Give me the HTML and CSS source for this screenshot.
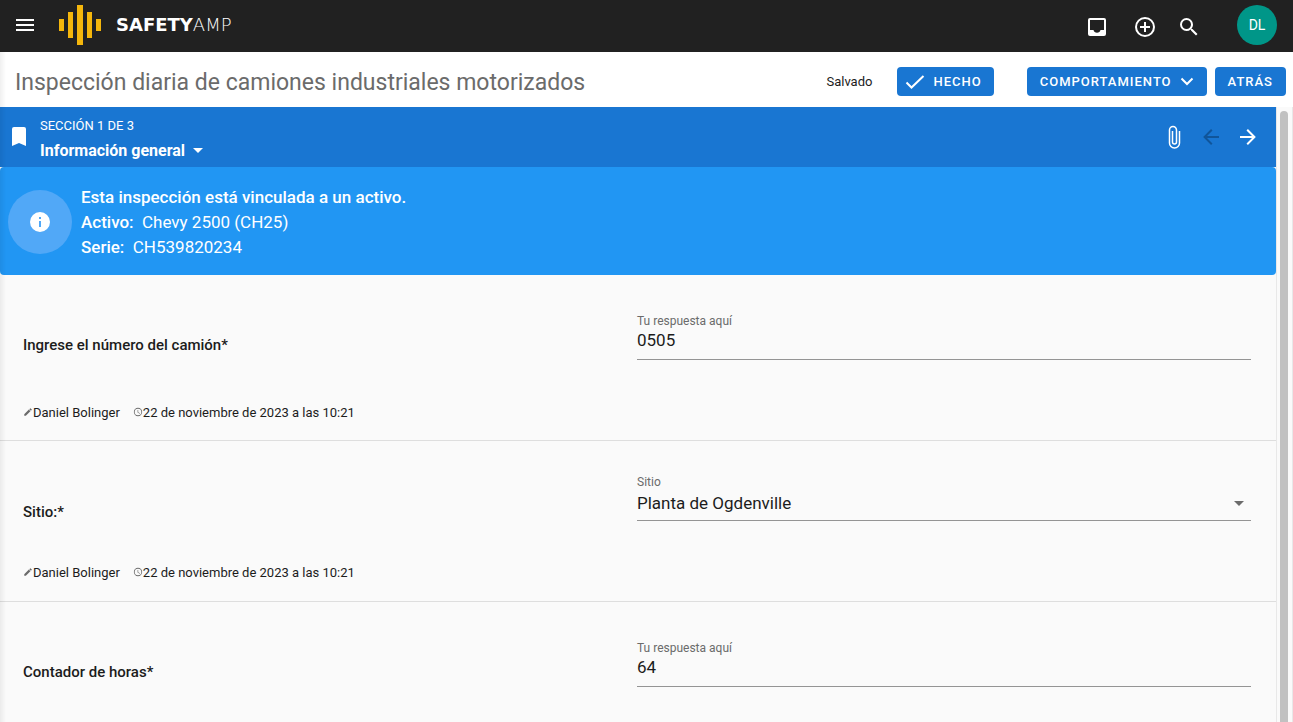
FILE: index.html
```
<!doctype html>
<html lang="es">
<head>
<meta charset="utf-8">
<meta name="viewport" content="width=device-width, initial-scale=1">
<title>SafetyAmp - Inspección</title>
<link rel="stylesheet" href="styles.css">
</head>
<body>
<header class="topbar">
	<button class="icon-btn" aria-label="Menú">
		<svg width="24" height="24" viewBox="0 0 24 24"><path d="M3 6h18v2H3zM3 11h18v2H3zM3 16h18v2H3z"/></svg>
	</button>
	<a class="logo" href="#">
		<svg width="42" height="40" viewBox="0 0 42 40"><path d="M0 14h5v12H0zM9 7h5v26H9zM18 0h6v40h-6zM28 7h5v26h-5zM37 14h5v12h-5z"/></svg>
		<span class="logo-text"><b>SAFETY</b>AMP</span>
	</a>
	<div class="topbar-tools">
		<button class="icon-btn" aria-label="Bandeja">
			<svg width="24" height="24" viewBox="0 0 24 24"><path d="M19 3H5a2 2 0 0 0-2 2v14a2 2 0 0 0 2 2h14a2 2 0 0 0 2-2V5a2 2 0 0 0-2-2zM5 5h14v10h-3.500a3.600 3.600 0 0 1-7 0H5z" fill-rule="evenodd"/></svg>
		</button>
		<button class="icon-btn" aria-label="Agregar">
			<svg width="24" height="24" viewBox="0 0 24 24"><path d="M12 20a8 8 0 1 1 0-16 8 8 0 0 1 0 16m0-18a10 10 0 1 0 0 20 10 10 0 0 0 0-20m1 5h-2v4H7v2h4v4h2v-4h4v-2h-4z"/></svg>
		</button>
		<button class="icon-btn search" aria-label="Buscar">
			<svg width="24" height="24" viewBox="0 0 24 24"><path d="M9.500 3A6.500 6.500 0 0 1 16 9.500c0 1.610-.590 3.090-1.560 4.230l.270.270h.790l5 5-1.500 1.500-5-5v-.790l-.270-.270A6.516 6.516 0 0 1 9.500 16a6.500 6.500 0 0 1 0-13m0 2a4.500 4.500 0 1 0 0 9 4.500 4.500 0 0 0 0-9z"/></svg>
		</button>
		<button class="avatar">DL</button>
	</div>
</header>

<div class="page">
	<div class="titlebar">
		<h1>Inspección diaria de camiones industriales motorizados</h1>
		<span class="saved">Salvado</span>
		<button class="btn btn-done">
			<svg width="20" height="14" viewBox="0 0 20 14"><path d="M1.500 7.500l5 5L18.500 1" class="stroke"/></svg>
			HECHO
		</button>
		<button class="btn">
			COMPORTAMIENTO
			<svg width="14" height="9" viewBox="0 0 14 9"><path d="M1.500 1.500L7 7l5.500-5.500" class="stroke"/></svg>
		</button>
		<button class="btn">ATRÁS</button>
	</div>

	<div class="scroller">
		<main class="content">
			<div class="section">
				<svg class="bookmark" width="24" height="24" viewBox="0 0 24 24"><path d="M17 2H7a2 2 0 0 0-2 2v17l7-3 7 3V4a2 2 0 0 0-2-2z"/></svg>
				<div class="section-name">
					<div class="section-count">SECCIÓN 1 DE 3</div>
					<button class="section-pick">
						Información general
						<svg width="10" height="5" viewBox="0 0 10 5"><path d="M0 0h10L5 5z"/></svg>
					</button>
				</div>
				<button class="icon-btn" aria-label="Adjuntar">
					<svg width="24" height="26" viewBox="0 0 24 26"><path d="M17.500 7v12a5 5 0 0 1-10 0V6a3.500 3.500 0 0 1 7 0v12a2 2 0 0 1-4 0V7" fill="none" stroke="currentColor" stroke-width="1.500"/></svg>
				</button>
				<button class="icon-btn" aria-label="Anterior" disabled>
					<svg width="24" height="24" viewBox="0 0 24 24"><path d="M20 11v2H8l5.500 5.500-1.420 1.420L4.160 12l7.920-7.920L13.500 5.500 8 11z"/></svg>
				</button>
				<button class="icon-btn" aria-label="Siguiente">
					<svg width="24" height="24" viewBox="0 0 24 24"><path d="M4 11v2h12l-5.500 5.500 1.420 1.420L19.840 12l-7.920-7.920L10.500 5.500 16 11z"/></svg>
				</button>
			</div>

			<div class="alert">
				<div class="alert-icon">
					<svg width="24" height="24" viewBox="0 0 24 24"><path d="M13 9h-2V7h2m0 10h-2v-6h2m-1-9a10 10 0 1 0 0 20 10 10 0 0 0 0-20z"/></svg>
				</div>
				<div>
					<div><b>Esta inspección está vinculada a un activo.</b></div>
					<div><b>Activo:</b>&nbsp; Chevy 2500 (CH25)</div>
					<div><b>Serie:</b>&nbsp; CH539820234</div>
				</div>
			</div>

			<div class="question">
				<label class="question-title" for="truck">Ingrese el número del camión*</label>
				<div class="field">
					<label for="truck">Tu respuesta aquí</label>
					<input type="text" id="truck" value="0505">
				</div>
				<div class="meta">
					<svg width="10" height="10" viewBox="0 0 24 24"><path d="M20.700 7a1 1 0 0 0 0-1.400l-2.300-2.300a1 1 0 0 0-1.400 0l-1.900 1.800 3.800 3.800M3 17.200V21h3.800L17.800 9.900l-3.700-3.700z"/></svg>
					<span class="who">Daniel Bolinger</span>
					<svg width="10" height="10" viewBox="0 0 24 24"><path d="M12 20a8 8 0 1 0 0-16 8 8 0 0 0 0 16m0-18a10 10 0 1 1 0 20 10 10 0 0 1 0-20m.500 5v5.300l4.500 2.600-.800 1.200L11 13V7z"/></svg>
					<span>22 de noviembre de 2023 a las 10:21</span>
				</div>
			</div>

			<div class="question question-select">
				<label class="question-title" for="site">Sitio:*</label>
				<div class="field">
					<label for="site">Sitio</label>
					<div class="select">
						<select id="site"><option>Planta de Ogdenville</option></select>
						<svg width="10" height="5" viewBox="0 0 10 5"><path d="M0 0h10L5 5z"/></svg>
					</div>
				</div>
				<div class="meta">
					<svg width="10" height="10" viewBox="0 0 24 24"><path d="M20.700 7a1 1 0 0 0 0-1.400l-2.300-2.300a1 1 0 0 0-1.400 0l-1.900 1.800 3.800 3.800M3 17.200V21h3.800L17.800 9.900l-3.700-3.700z"/></svg>
					<span class="who">Daniel Bolinger</span>
					<svg width="10" height="10" viewBox="0 0 24 24"><path d="M12 20a8 8 0 1 0 0-16 8 8 0 0 0 0 16m0-18a10 10 0 1 1 0 20 10 10 0 0 1 0-20m.500 5v5.300l4.500 2.600-.800 1.200L11 13V7z"/></svg>
					<span>22 de noviembre de 2023 a las 10:21</span>
				</div>
			</div>

			<div class="question">
				<label class="question-title" for="hours">Contador de horas*</label>
				<div class="field">
					<label for="hours">Tu respuesta aquí</label>
					<input type="text" id="hours" value="64">
				</div>
			</div>
		</main>
		<div class="track"><div class="thumb"></div></div>
	</div>
</div>
</body>
</html>
```
FILE: styles.css
```
* {
	box-sizing: border-box;
}

body {
	margin: 0;
	height: 100vh;
	display: flex;
	flex-direction: column;
	overflow: hidden;
	font-family: Roboto, "Liberation Sans", sans-serif;
	font-size: 17px;
	color: #1c1c1c;
	background-color: #fff;
}

button, input, select {
	font: inherit;
	color: inherit;
	border: 0;
	padding: 0;
	background: none;
}

button {
	cursor: pointer;
}

svg {
	display: block;
	flex: none;
	fill: currentColor;
}

.stroke {
	fill: none;
	stroke: currentColor;
	stroke-width: 2;
}

/* top bar */
.topbar {
	flex: none;
	display: flex;
	align-items: center;
	height: 52px;
	padding: 0 16px 2px 13px;
	color: #fff;
	background-color: #212121;
}

.logo {
	display: flex;
	align-items: center;
	gap: 15px;
	margin-left: 22px;
	color: #fff;
	text-decoration: none;
}

.logo svg {
	color: #f4b60c;
}

.logo-text {
	font-family: "DejaVu Sans", sans-serif;
	font-size: 18px;
	font-weight: 200;
	line-height: 20px;
}

.logo-text b {
	font-weight: 700;
}

.topbar-tools {
	display: flex;
	align-items: center;
	gap: 24px;
	margin-left: auto;
}

.topbar-tools .icon-btn {
	padding-top: 4px;
}

.topbar-tools .search {
	margin-left: -4px;
	margin-right: 12px;
}

.avatar {
	width: 40px;
	height: 40px;
	border-radius: 50%;
	font-size: 14px;
	background-color: #009688;
}

/* title and actions */
.page {
	position: relative;
	flex: 1;
	min-height: 0;
	display: flex;
	flex-direction: column;
}

.page::before {
	content: "";
	position: absolute;
	top: 0;
	bottom: 0;
	left: 0;
	width: 6px;
	z-index: 1;
	background: linear-gradient(to right, rgba(0,0,0,0.06), rgba(0,0,0,0));
}

.titlebar {
	flex: none;
	display: flex;
	align-items: center;
	height: 55px;
	padding: 4px 7px 0 15px;
}

h1 {
	flex: 1;
	margin: 0;
	padding-top: 2px;
	font-size: 23px;
	font-weight: 400;
	line-height: 32px;
	color: #6b6b6b;
}

.saved {
	margin-right: 25px;
	font-size: 13px;
}

.btn {
	display: flex;
	align-items: center;
	gap: 8px;
	height: 29px;
	padding: 0 13px;
	margin-left: 8px;
	border-radius: 4px;
	font-size: 13px;
	font-weight: 500;
	letter-spacing: 1px;
	color: #fff;
	background-color: #1976d2;
}

.btn-done {
	padding: 0 12px 0 8px;
	margin: 0 25px 0 0;
}

/* scrolling part */
.scroller {
	flex: 1;
	min-height: 0;
	display: flex;
}

.content {
	flex: 1;
	overflow-y: auto;
	scrollbar-width: none;
	background-color: #fafafa;
}

.track {
	width: 17px;
	padding: 4px 3px 0;
	border-left: 1px solid #e8e8e8;
	border-right: 1px solid #e8e8e8;
	background-color: #fafafa;
	overflow: hidden;
}

.thumb {
	width: 8px;
	height: 110%;
	border-radius: 4px;
	background-color: #c1c1c1;
}

.section {
	display: flex;
	align-items: center;
	gap: 13px;
	height: 60px;
	padding: 0 16px 0 7px;
	color: #fff;
	background-color: #1976d2;
}

.section-name {
	flex: 1;
	padding-top: 3px;
	margin-left: -4px;
}

.section-count {
	font-size: 13px;
	line-height: 24px;
}

.section-pick {
	display: flex;
	align-items: center;
	gap: 8px;
	font-size: 16px;
	font-weight: 700;
	line-height: 26px;
}

.icon-btn:disabled {
	color: #10559a;
}

.alert {
	display: flex;
	align-items: center;
	gap: 9px;
	height: 108px;
	padding: 2px 8px 0;
	border-radius: 4px;
	line-height: 25px;
	color: #fff;
	background-color: #2196f3;
}

.alert b {
	font-weight: 500;
}

.alert-icon {
	display: flex;
	align-items: center;
	justify-content: center;
	width: 64px;
	height: 64px;
	border-radius: 50%;
	background-color: #51a8f7;
}

/* questions */
.question {
	display: grid;
	grid-template-columns: 1fr 1fr;
	align-items: start;
	align-content: start;
	min-height: 161px;
	padding: 36px 25px 18px 23px;
	border-bottom: 1px solid #dedede;
}

.question-select {
	padding-top: 31px;
}

.question-title {
	padding-top: 24px;
	font-size: 15px;
	font-weight: 500;
	line-height: 20px;
}

.question-select .question-title {
	padding-top: 30px;
}

.field label {
	display: block;
	font-size: 12px;
	line-height: 20px;
	color: #6b6b6b;
}

.field input, .field select {
	display: block;
	width: 100%;
	height: 29px;
	padding-bottom: 11px;
	border-bottom: 1px solid #949494;
	appearance: none;
	outline: none;
}

.field select {
	padding-bottom: 6px;
}

.select {
	position: relative;
}

.select svg {
	position: absolute;
	top: 9px;
	right: 7px;
	color: #6b6b6b;
	pointer-events: none;
}

.meta {
	grid-column: 1 / 3;
	display: flex;
	align-items: center;
	height: 20px;
	margin-top: 42px;
	font-size: 13px;
}

.question-select .meta {
	margin-top: 40px;
}

.meta svg {
	color: #6b6b6b;
}

.who {
	margin-right: 13px;
}
```
